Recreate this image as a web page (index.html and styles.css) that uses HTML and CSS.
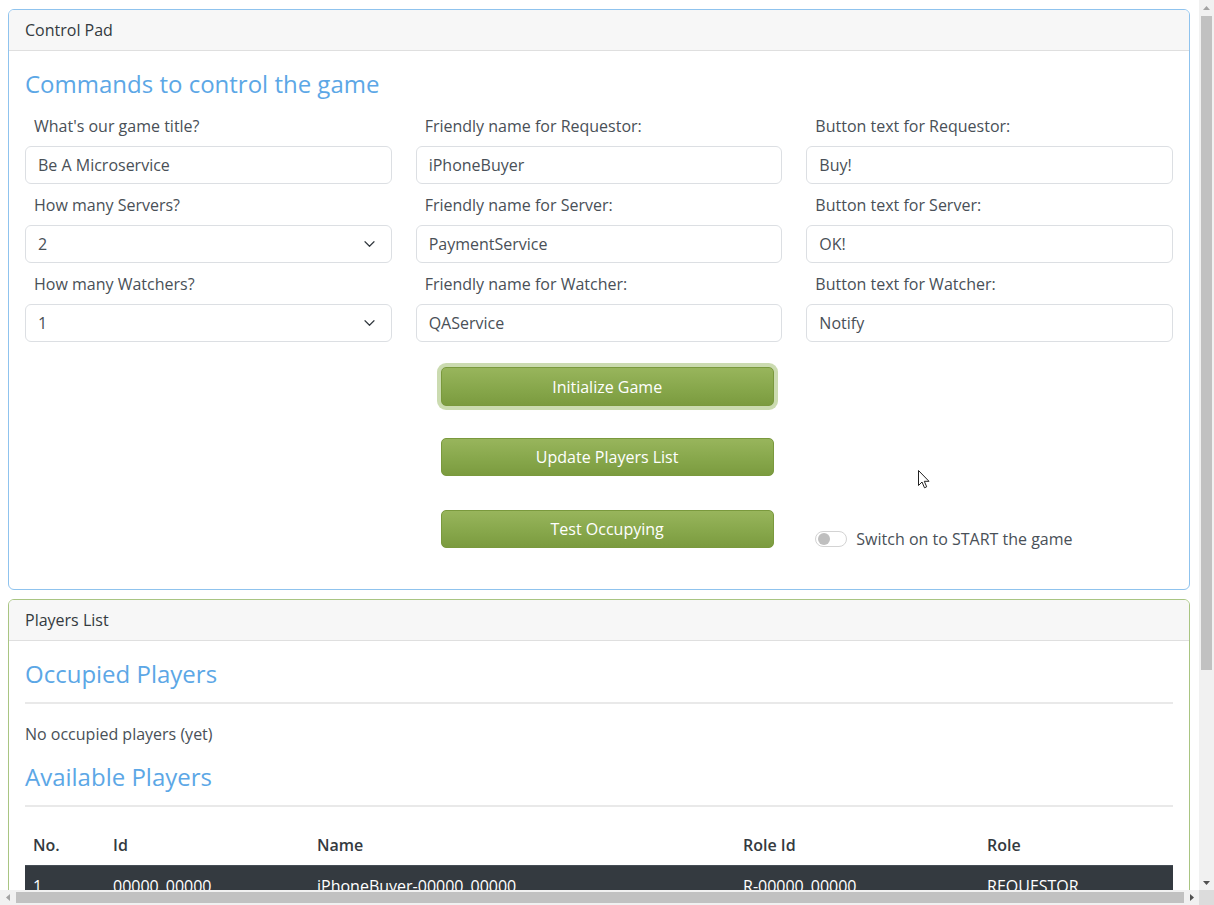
FILE: index.html
```html
<!DOCTYPE html>
<html>
    <head>
    <title>Be A Microservice - Control Pad</title>
    <meta charset="UTF-8">
    <meta name="viewport" content="width=device-width, initial-scale=1.0">
    <link rel="stylesheet" href="styles.css">
    </head>

    <body>
        <div class="ventana">
            <div class="pagina">
                <div class="tarjeta tarjeta-control">
                    <div class="tarjeta-cabecera">Control Pad</div>
                    <div class="tarjeta-cuerpo">
                        <h4 class="titulo">Commands to control the game</h4>

                        <div class="formulario">
                            <div class="grupo">
                                <label class="etiqueta">What's our game title?</label>
                                <input class="caja" value="Be A Microservice">
                            </div>
                            <div class="grupo">
                                <label class="etiqueta">Friendly name for Requestor:</label>
                                <input class="caja" value="iPhoneBuyer">
                            </div>
                            <div class="grupo">
                                <label class="etiqueta">Button text for Requestor:</label>
                                <input class="caja" value="Buy!">
                            </div>

                            <div class="grupo">
                                <label class="etiqueta">How many Servers?</label>
                                <select class="caja selector">
                                    <option>1</option>
                                    <option selected>2</option>
                                    <option>3</option>
                                </select>
                            </div>
                            <div class="grupo">
                                <label class="etiqueta">Friendly name for Server:</label>
                                <input class="caja" value="PaymentService">
                            </div>
                            <div class="grupo">
                                <label class="etiqueta">Button text for Server:</label>
                                <input class="caja" value="OK!">
                            </div>

                            <div class="grupo">
                                <label class="etiqueta">How many Watchers?</label>
                                <select class="caja selector">
                                    <option selected>1</option>
                                    <option>2</option>
                                </select>
                            </div>
                            <div class="grupo">
                                <label class="etiqueta">Friendly name for Watcher:</label>
                                <input class="caja" value="QAService">
                            </div>
                            <div class="grupo">
                                <label class="etiqueta">Button text for Watcher:</label>
                                <input class="caja" value="Notify">
                            </div>
                        </div>

                        <div class="acciones">
                            <div></div>
                            <div class="botonera">
                                <button class="boton boton-foco">Initialize Game</button>
                                <button class="boton">Update Players List</button>
                                <button class="boton">Test Occupying</button>
                            </div>
                            <div class="interruptor">
                                <span class="switch"><span class="perilla"></span></span>
                                <label>Switch on to START the game</label>
                            </div>
                        </div>
                    </div>
                </div>

                <div class="tarjeta tarjeta-jugadores">
                    <div class="tarjeta-cabecera">Players List</div>
                    <div class="tarjeta-cuerpo">
                        <h4 class="titulo">Occupied Players</h4>
                        <hr class="linea">
                        <p class="texto">No occupied players (yet)</p>
                        <h4 class="titulo">Available Players</h4>
                        <hr class="linea">

                        <table class="tabla">
                            <thead>
                                <tr>
                                    <th class="c-no">No.</th>
                                    <th class="c-id">Id</th>
                                    <th class="c-nombre">Name</th>
                                    <th class="c-rol-id">Role Id</th>
                                    <th>Role</th>
                                </tr>
                            </thead>
                            <tbody>
                                <tr>
                                    <td>1</td>
                                    <td>00000_00000</td>
                                    <td>iPhoneBuyer-00000_00000</td>
                                    <td>R-00000_00000</td>
                                    <td>REQUESTOR</td>
                                </tr>
                                <tr>
                                    <td>2</td>
                                    <td>00000_00001</td>
                                    <td>PaymentService-00000_00001</td>
                                    <td>S-00000_00001</td>
                                    <td>SERVER</td>
                                </tr>
                                <tr>
                                    <td>3</td>
                                    <td>00000_00002</td>
                                    <td>PaymentService-00000_00002</td>
                                    <td>S-00000_00002</td>
                                    <td>SERVER</td>
                                </tr>
                                <tr>
                                    <td>4</td>
                                    <td>00000_00003</td>
                                    <td>QAService-00000_00003</td>
                                    <td>W-00000_00003</td>
                                    <td>WATCHER</td>
                                </tr>
                            </tbody>
                        </table>
                    </div>
                </div>

                <svg class="cursor" width="12" height="19" viewBox="0 0 12 19">
                    <path d="M0.5 0.5 L0.5 15.5 L4 12 L6.5 17.8 L8.7 16.8 L6.3 11.3 L11 11.3 Z" fill="white" stroke="#222" stroke-width="1" stroke-linejoin="round"/>
                </svg>
            </div>

            <div class="barra-v">
                <span class="flecha"><svg width="7" height="4" viewBox="0 0 7 4"><path d="M0 4 L3.5 0 L7 4 Z" fill="#a3a3a3"/></svg></span>
                <span class="pulgar-v"></span>
                <span class="flecha flecha-fin"><svg width="7" height="4" viewBox="0 0 7 4"><path d="M0 0 L7 0 L3.5 4 Z" fill="#505050"/></svg></span>
            </div>
            <div class="barra-h">
                <span class="flecha"><svg width="4" height="7" viewBox="0 0 4 7"><path d="M4 0 L4 7 L0 3.5 Z" fill="#a3a3a3"/></svg></span>
                <span class="pulgar-h"></span>
                <span class="flecha flecha-fin"><svg width="4" height="7" viewBox="0 0 4 7"><path d="M0 0 L4 3.5 L0 7 Z" fill="#505050"/></svg></span>
            </div>
            <div class="esquina"></div>
        </div>
    </body>
</html>
```

FILE: styles.css
```css
body{
    margin: 0;
    background-color: white;
    font-family: "Segoe UI", "Open Sans", "Liberation Sans", sans-serif;
    font-size: 16px;
    line-height: 24px;
    color: #495057;
}

.ventana{
    display: grid;
    grid-template-columns: 1199px 15px;
    grid-template-rows: 890px 15px;
    height: 905px;
    overflow: hidden;
}

.pagina{
    position: relative;
    overflow: hidden;
    padding: 9px 9px 0 8px;
}

/* barras de desplazamiento */
.barra-v{
    display: flex;
    flex-direction: column;
    align-items: center;
    background-color: #f1f1f1;
}

.barra-h{
    display: flex;
    align-items: center;
    background-color: #f1f1f1;
}

.flecha{
    display: flex;
    align-items: center;
    justify-content: center;
    width: 15px;
    height: 15px;
    flex: none;
}

.flecha-fin{
    margin-top: auto;
    margin-left: auto;
}

.barra-h .flecha-fin{
    margin-top: 0;
}

.barra-v .flecha-fin{
    margin-left: 0;
}

.pulgar-v{
    width: 11px;
    height: 654px;
    margin-top: 1px;
    background-color: #c1c1c1;
}

.pulgar-h{
    width: 1168px;
    height: 11px;
    margin-left: 1px;
    background-color: #c1c1c1;
}

.esquina{
    background-color: #dcdcdc;
}

.cursor{
    position: absolute;
    left: 918px;
    top: 470px;
}

/* tarjetas */
.tarjeta{
    border: 1px solid #dfdfdf;
    border-radius: 6px;
    margin-bottom: 9px;
    overflow: hidden;
}

.tarjeta-control{
    border-color: #8fc3ee;
}

.tarjeta-jugadores{
    border-color: #a9c582;
}

.tarjeta-cabecera{
    background-color: #f7f7f7;
    border-bottom: 1px solid #dfdfdf;
    padding: 8px 16px;
    color: #343a40;
}

.tarjeta-cuerpo{
    padding: 16px;
}

.titulo{
    margin: 2px 0 8px 0;
    font-size: 24px;
    line-height: 29px;
    font-weight: 500;
    color: #5ca7e6;
}

.formulario{
    display: grid;
    grid-template-columns: repeat(3, 1fr);
    column-gap: 24px;
    margin-top: 16px;
}

.grupo{
    display: flex;
    flex-direction: column;
    margin-bottom: 9px;
}

.etiqueta{
    padding-left: 9px;
    margin-bottom: 8px;
}

.caja{
    height: 38px;
    box-sizing: border-box;
    padding: 6px 12px;
    border: 1px solid #dcdfe3;
    border-radius: 6px;
    font-family: inherit;
    font-size: 16px;
    color: #495057;
    background-color: white;
}

.selector{
    appearance: none;
    background-image: url("data:image/svg+xml,%3csvg xmlns='http://www.w3.org/2000/svg' viewBox='0 0 16 16'%3e%3cpath fill='none' stroke='%23343a40' stroke-linecap='round' stroke-linejoin='round' stroke-width='1.6' d='m2 5 6 6 6-6'/%3e%3c/svg%3e");
    background-repeat: no-repeat;
    background-position: right 14px center;
    background-size: 15px 12px;
}

.acciones{
    display: grid;
    grid-template-columns: repeat(3, 1fr);
    column-gap: 24px;
    margin-top: 16px;
}

.botonera{
    display: flex;
    flex-direction: column;
    padding-left: 25px;
}

.boton{
    width: 333px;
    height: 38px;
    margin-bottom: 33px;
    border: 1px solid #7a993d;
    border-radius: 5px;
    color: white;
    font-family: inherit;
    font-size: 16px;
    background-image: linear-gradient(#98b55c, #86a64a 60%, #7b9b3f);
}

.boton:nth-child(2){
    margin-bottom: 34px;
}

.boton:last-child{
    margin-bottom: 25px;
}

.boton-foco{
    height: 39px;
    margin-bottom: 32px;
    box-shadow: 0 0 0 4px rgba(140, 175, 80, 0.45);
}

.interruptor{
    align-self: end;
    display: flex;
    align-items: center;
    gap: 9px;
    padding-left: 9px;
    margin-bottom: 22px;
}

.switch{
    display: flex;
    align-items: center;
    width: 32px;
    height: 16px;
    box-sizing: border-box;
    border: 1px solid #d3d3d3;
    border-radius: 8px;
    padding-left: 2px;
}

.perilla{
    width: 12px;
    height: 12px;
    border-radius: 50%;
    background-color: #bfbfbf;
}

.linea{
    margin: 14px 0 18px 0;
    border: none;
    border-top: 2px solid #e9e9e9;
}

.texto{
    margin: 0 0 16px 0;
}

.tabla{
    width: 100%;
    border-collapse: collapse;
    margin-bottom: 16px;
}

.tabla th,
.tabla td{
    padding: 8px;
    text-align: left;
    border-top: 1px solid #dee2e6;
}

.tabla th{
    font-weight: 600;
    color: #343a40;
    border-top: none;
    border-bottom: 1px solid #454d55;
}

.tabla td{
    background-color: #343a40;
    color: white;
    border-color: #454d55;
}

.c-no{
    width: 64px;
}

.c-id{
    width: 188px;
}

.c-nombre{
    width: 410px;
}

.c-rol-id{
    width: 228px;
}
```
